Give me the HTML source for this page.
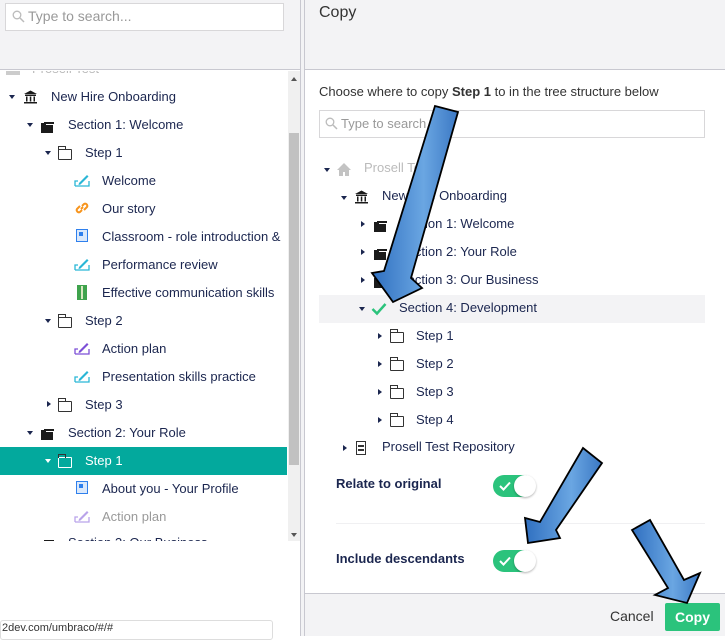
<!DOCTYPE html>
<html><head><meta charset="utf-8"><style>
*{margin:0;padding:0;box-sizing:border-box}
body{width:725px;height:636px;overflow:hidden;background:#fff;font-family:"Liberation Sans",sans-serif;color:#1b264f;position:relative;font-size:13px}
.a{position:absolute}
.row{position:absolute;height:28px;line-height:28px;white-space:nowrap;font-size:13px;color:#1b264f}
.car{position:absolute;width:0;height:0}
.cd{border-left:3.5px solid transparent;border-right:3.5px solid transparent;border-top:4px solid #1b264f}
.cr{border-top:3.5px solid transparent;border-bottom:3.5px solid transparent;border-left:4px solid #1b264f}
.fold{position:absolute;width:14px;height:11px;border:1.2px solid #333;border-radius:1px}
.fold:before{content:"";position:absolute;left:-1px;top:-4px;width:6px;height:3px;border:1.2px solid #333;border-bottom:none}
.sec{position:absolute;width:12px;height:8px;background:#1b1b1b;margin-top:2px}
.sec:before{content:"";position:absolute;left:3px;top:-3px;width:10px;height:2px;background:#1b1b1b}
.sec:after{content:"";position:absolute;left:0;top:-2px;width:5px;height:2px;background:#1b1b1b}
</style></head><body>
<!-- left panel -->
<div class="a" style="left:0;top:0;width:300px;height:70px;background:#f3f3f5;border-bottom:1px solid #c8c8d0"></div>
<div class="a" style="left:5px;top:3px;width:279px;height:28px;background:#fff;border:1px solid #d8d7d9"></div>
<svg class="a" style="left:12px;top:10px" width="13" height="13"><circle cx="5" cy="5" r="3.8" fill="none" stroke="#bbb" stroke-width="1.3"/><line x1="8" y1="8" x2="12" y2="12" stroke="#bbb" stroke-width="1.5"/></svg>
<div class="a" style="left:28px;top:8px;font-size:14px;color:#999">Type to search...</div>
<div class="a" style="left:300px;top:0;width:5px;height:636px;background:#f3f3f5;border-left:1px solid #c8c8d0;border-right:1px solid #c8c8d0"></div>
<!-- scrollbar -->
<div class="a" style="left:288px;top:71px;width:12px;height:470px;background:#f0f0f0"></div>
<div class="a" style="left:289px;top:133px;width:10px;height:332px;background:#c1c1c1"></div>
<div class="car" style="left:291px;top:77px;border-left:3.5px solid transparent;border-right:3.5px solid transparent;border-bottom:4px solid #555"></div>
<div class="car cd" style="left:291px;top:533px;border-top-color:#555"></div>
<div class="a" style="left:0;top:71px;width:288px;height:470px;overflow:hidden">
 <div class="row" style="left:32px;top:-16px;color:#bbb">Prosell Test</div>
 <div class="a" style="left:6px;top:-4px;width:14px;height:8px;background:#ccc"></div>
 <div class="car cd" style="left:9px;top:24px"></div>
 <svg class="a" style="left:23px;top:19px" width="15" height="14"><path d="M1 4 L7.5 0.5 L14 4 Z M1 12 H14 V13.5 H1Z M2 4.5h11v1.5H2z M3 6.5h1.5v5H3z M6.8 6.5h1.5v5H6.8z M10.5 6.5h1.5v5h-1.5z" fill="#1b1b1b"/></svg>
 <div class="row" style="left:51px;top:12px">New Hire Onboarding</div>
 <div class="car cd" style="left:27px;top:52px"></div>
 <div class="sec" style="left:41px;top:52px"></div>
 <div class="row" style="left:68px;top:40px">Section 1: Welcome</div>
 <div class="car cd" style="left:45px;top:80px"></div>
 <div class="fold" style="left:58px;top:78px"></div>
 <div class="row" style="left:85px;top:68px">Step 1</div>
 <svg class="a" style="left:74px;top:102px" width="16" height="14"><path d="M1 13h14v-5M1 13v-5h3" fill="none" stroke="#29b6d6" stroke-width="1.3"/><path d="M5 10l8-8 1.5 1.5-8 8-2 .5z" fill="#29b6d6"/></svg>
 <div class="row" style="left:102px;top:96px">Welcome</div>
 <svg class="a" style="left:75px;top:130px" width="14" height="14"><path d="M6 8l2-2M5 5l-3 3a2.2 2.2 0 0 0 3 3l2-2M9 9l3-3a2.2 2.2 0 0 0-3-3l-2 2" fill="none" stroke="#f7941d" stroke-width="2"/></svg>
 <div class="row" style="left:102px;top:124px">Our story</div>
 <div class="a" style="left:76px;top:158px;width:12px;height:13px;border:1.5px solid #2f80ed;background:#dbe9fb"></div>
 <div class="a" style="left:79px;top:161px;width:4px;height:4px;background:#2f80ed"></div>
 <div class="row" style="left:102px;top:152px">Classroom - role introduction &amp;</div>
 <svg class="a" style="left:74px;top:186px" width="16" height="14"><path d="M1 13h14v-5M1 13v-5h3" fill="none" stroke="#29b6d6" stroke-width="1.3"/><path d="M5 10l8-8 1.5 1.5-8 8-2 .5z" fill="#29b6d6"/></svg>
 <div class="row" style="left:102px;top:180px">Performance review</div>
 <div class="a" style="left:77px;top:214px;width:10px;height:15px;background:#3fa34d"></div>
 <div class="a" style="left:81px;top:215px;width:2px;height:13px;background:#d8e8c0"></div>
 <div class="row" style="left:102px;top:208px">Effective communication skills</div>
 <div class="car cd" style="left:45px;top:248px"></div>
 <div class="fold" style="left:58px;top:246px"></div>
 <div class="row" style="left:85px;top:236px">Step 2</div>
 <svg class="a" style="left:74px;top:270px" width="16" height="14"><path d="M1 13h14v-5M1 13v-5h3" fill="none" stroke="#7c4fd6" stroke-width="1.3"/><path d="M5 10l8-8 1.5 1.5-8 8-2 .5z" fill="#7c4fd6"/></svg>
 <div class="row" style="left:102px;top:264px">Action plan</div>
 <svg class="a" style="left:74px;top:298px" width="16" height="14"><path d="M1 13h14v-5M1 13v-5h3" fill="none" stroke="#29b6d6" stroke-width="1.3"/><path d="M5 10l8-8 1.5 1.5-8 8-2 .5z" fill="#29b6d6"/></svg>
 <div class="row" style="left:102px;top:292px">Presentation skills practice</div>
 <div class="car cr" style="left:47px;top:330px"></div>
 <div class="fold" style="left:58px;top:330px"></div>
 <div class="row" style="left:85px;top:320px">Step 3</div>
 <div class="car cd" style="left:27px;top:360px"></div>
 <div class="sec" style="left:41px;top:359px"></div>
 <div class="row" style="left:68px;top:348px">Section 2: Your Role</div>
 <div class="a" style="left:0;top:376px;width:287px;height:28px;background:#03a99d"></div>
 <div class="car cd" style="left:45px;top:388px;border-top-color:#fff"></div>
 <div class="fold" style="left:58px;top:386px;border-color:#fff"></div>
 <div class="row" style="left:85px;top:376px;color:#fff">Step 1</div>
 <div class="a" style="left:76px;top:410px;width:12px;height:13px;border:1.5px solid #2f80ed;background:#dbe9fb"></div>
 <div class="a" style="left:79px;top:413px;width:4px;height:4px;background:#2f80ed"></div>
 <div class="row" style="left:102px;top:404px">About you - Your Profile</div>
 <svg class="a" style="left:74px;top:438px" width="16" height="14"><path d="M1 13h14v-5M1 13v-5h3" fill="none" stroke="#b9a3ea" stroke-width="1.3"/><path d="M5 10l8-8 1.5 1.5-8 8-2 .5z" fill="#b9a3ea"/></svg>
 <div class="row" style="left:102px;top:432px;color:#999">Action plan</div>
 <div class="car cr" style="left:29px;top:470px"></div>
 <div class="sec" style="left:41px;top:470px"></div>
 <div class="row" style="left:68px;top:458px">Section 3: Our Business</div>
</div>
<div class="a" style="left:0;top:620px;width:273px;height:20px;border:1px solid #ddd;border-radius:3px;font-size:11px;color:#333;padding:1px 1px;background:#fff">2dev.com/umbraco/#/#</div>
<!-- right panel -->
<div class="a" style="left:305px;top:0;width:420px;height:70px;background:#f3f3f5;border-bottom:1px solid #c8c8d0"></div>
<div class="a" style="left:319px;top:4px;font-size:16px;color:#333">Copy</div>
<div class="a" style="left:319px;top:84px;font-size:13px;color:#333">Choose where to copy <b>Step 1</b> to in the tree structure below</div>
<div class="a" style="left:319px;top:110px;width:386px;height:28px;border:1px solid #d8d7d9"></div>
<svg class="a" style="left:325px;top:117px" width="13" height="13"><circle cx="5" cy="5" r="3.8" fill="none" stroke="#bbb" stroke-width="1.3"/><line x1="8" y1="8" x2="12" y2="12" stroke="#bbb" stroke-width="1.5"/></svg>
<div class="a" style="left:341px;top:116px;font-size:13px;color:#999">Type to search...</div>
<div class="car cd" style="left:324px;top:168px;border-top-color:#1b264f"></div>
<svg class="a" style="left:336px;top:162px" width="16" height="15"><path d="M8 1L1 8h2v6h4v-4h2v4h4V8h2z" fill="#c3c3c3"/></svg>
<div class="row" style="left:364px;top:154px;color:#bbb">Prosell Test</div>
<div class="car cd" style="left:341px;top:196px"></div>
<svg class="a" style="left:354px;top:190px" width="15" height="14"><path d="M1 4 L7.5 0.5 L14 4 Z M1 12 H14 V13.5 H1Z M2 4.5h11v1.5H2z M3 6.5h1.5v5H3z M6.8 6.5h1.5v5H6.8z M10.5 6.5h1.5v5h-1.5z" fill="#1b1b1b"/></svg>
<div class="row" style="left:382px;top:182px">New Hire Onboarding</div>
<div class="car cr" style="left:361px;top:221px"></div><div class="sec" style="left:374px;top:222px"></div>
<div class="row" style="left:399px;top:210px">Section 1: Welcome</div>
<div class="car cr" style="left:361px;top:249px"></div><div class="sec" style="left:374px;top:250px"></div>
<div class="row" style="left:399px;top:238px">Section 2: Your Role</div>
<div class="car cr" style="left:361px;top:277px"></div><div class="sec" style="left:374px;top:278px"></div>
<div class="row" style="left:399px;top:266px">Section 3: Our Business</div>
<div class="a" style="left:319px;top:295px;width:386px;height:28px;background:#f3f3f5"></div>
<div class="car cd" style="left:359px;top:307px"></div>
<svg class="a" style="left:371px;top:302px" width="16" height="14"><path d="M1.5 7l4.5 4.5L14.5 2" fill="none" stroke="#2bc37c" stroke-width="2.5"/></svg>
<div class="row" style="left:399px;top:294px">Section 4: Development</div>
<div class="car cr" style="left:378px;top:333px"></div><div class="fold" style="left:390px;top:332px"></div><div class="row" style="left:416px;top:322px">Step 1</div>
<div class="car cr" style="left:378px;top:361px"></div><div class="fold" style="left:390px;top:360px"></div><div class="row" style="left:416px;top:350px">Step 2</div>
<div class="car cr" style="left:378px;top:389px"></div><div class="fold" style="left:390px;top:388px"></div><div class="row" style="left:416px;top:378px">Step 3</div>
<div class="car cr" style="left:378px;top:417px"></div><div class="fold" style="left:390px;top:416px"></div><div class="row" style="left:416px;top:406px">Step 4</div>
<div class="car cr" style="left:343px;top:445px"></div>
<div class="a" style="left:356px;top:441px;width:10px;height:14px;border:1.5px solid #333;background:#fff"></div>
<div class="a" style="left:358px;top:445px;width:6px;height:2px;background:#333"></div><div class="a" style="left:358px;top:449px;width:6px;height:2px;background:#333"></div>
<div class="row" style="left:382px;top:433px">Prosell Test Repository</div>
<div class="a" style="left:336px;top:476px;font-size:13px;font-weight:bold;color:#1b264f">Relate to original</div>
<div class="a" style="left:493px;top:475px;width:42px;height:22px;border-radius:11px;background:#2bc37c"></div>
<div class="a" style="left:514px;top:475px;width:22px;height:22px;border-radius:11px;background:#fff;box-shadow:0 1px 2px rgba(0,0,0,.3)"></div>
<svg class="a" style="left:499px;top:481px" width="12" height="10"><path d="M1 5l3.5 3.5L11 1.5" fill="none" stroke="#fff" stroke-width="2"/></svg>
<div class="a" style="left:336px;top:523px;width:369px;height:1px;background:#f0f0f2"></div>
<div class="a" style="left:336px;top:551px;font-size:13px;font-weight:bold;color:#1b264f">Include descendants</div>
<div class="a" style="left:493px;top:550px;width:42px;height:22px;border-radius:11px;background:#2bc37c"></div>
<div class="a" style="left:514px;top:550px;width:22px;height:22px;border-radius:11px;background:#fff;box-shadow:0 1px 2px rgba(0,0,0,.3)"></div>
<svg class="a" style="left:499px;top:556px" width="12" height="10"><path d="M1 5l3.5 3.5L11 1.5" fill="none" stroke="#fff" stroke-width="2"/></svg>
<div class="a" style="left:305px;top:593px;width:420px;height:43px;background:#f3f3f5;border-top:1px solid #c8c8d0"></div>
<div class="a" style="left:610px;top:608px;font-size:14px;color:#333">Cancel</div>
<div class="a" style="left:665px;top:603px;width:55px;height:28px;background:#2bc37c;border-radius:2px;color:#fff;font-weight:bold;font-size:14px;text-align:center;line-height:28px">Copy</div>
<!-- arrows -->
<svg class="a" style="left:0;top:0" width="725" height="636">
<defs><linearGradient id="g" x1="0" y1="0" x2="1" y2="0"><stop offset="0" stop-color="#2f6fc0"/><stop offset="0.6" stop-color="#6aa6e2"/><stop offset="1" stop-color="#3b78c4"/></linearGradient></defs>
<g fill="url(#g)" stroke="#000" stroke-width="1.8" stroke-linejoin="miter">
<polygon points="435,106 458,112 411,278 422,288 393,302 372,273 384,271"/>
<polygon points="583,448 602,463 556,530 560,538 528,543 525,518 540,522"/>
<polygon points="632,530 650,520 684,580 700,573 687,603 655,595 668,588"/>
</g></svg>
</body></html>
